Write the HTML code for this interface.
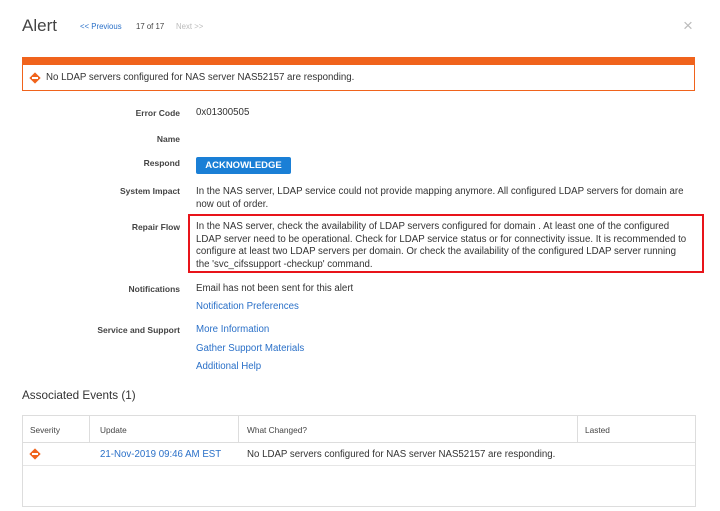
<!DOCTYPE html>
<html><head><style>
body{margin:0;width:720px;height:511px;background:#fff;font-family:"Liberation Sans",sans-serif;color:#333;position:relative;overflow:hidden}
.a{position:absolute;white-space:nowrap}
.l{position:absolute;right:540px;font-size:8.5px;font-weight:bold;color:#444;text-align:right;white-space:nowrap}
.v{position:absolute;left:196px;font-size:9.7px;color:#333;white-space:nowrap}
.lk{color:#2a70c8}
.dia{position:absolute;width:8px;height:8px;background:#f0631c;transform:rotate(45deg)}
.dia:after{content:"";position:absolute;left:1px;top:3px;width:6px;height:2px;background:#fff;transform:rotate(-45deg)}
</style></head><body>
<div class="a" style="left:22px;top:16px;font-size:17px;color:#444">Alert</div>
<div class="a lk" style="left:80px;top:22px;font-size:7.8px">&lt;&lt; Previous</div>
<div class="a" style="left:136px;top:22px;font-size:7.8px;color:#444">17 of 17</div>
<div class="a" style="left:176px;top:22px;font-size:7.8px;color:#bbb">Next &gt;&gt;</div>
<div class="a" style="left:683px;top:16px;font-size:17px;color:#bbb">×</div>
<div class="a" style="left:22px;top:57px;width:673px;height:34px;border:1px solid #f0631c;border-top:8px solid #f0631c;box-sizing:border-box"></div>
<div class="dia" style="left:31px;top:74px"></div>
<div class="a" style="left:46px;top:72px;font-size:9.7px;color:#333">No LDAP servers configured for NAS server NAS52157 are responding.</div>

<div class="l" style="top:108px">Error Code</div><div class="v" style="top:107px">0x01300505</div>
<div class="l" style="top:134px">Name</div>
<div class="l" style="top:158px">Respond</div>
<div class="a" style="left:196px;top:157px;width:95px;height:17px;background:#1a7fd6;border-radius:2px;color:#fff;font-size:9.5px;font-weight:bold;text-align:center;line-height:17px">ACKNOWLEDGE</div>
<div class="l" style="top:186px">System Impact</div>
<div class="v" style="top:185px;line-height:13px">In the NAS server, LDAP service could not provide mapping anymore. All configured LDAP servers for domain are<br>now out of order.</div>
<div class="a" style="left:188px;top:214px;width:516px;height:59px;border:2px solid #e8141a;box-sizing:border-box"></div>
<div class="l" style="top:222px">Repair Flow</div>
<div class="v" style="top:221px;line-height:12.7px">In the NAS server, check the availability of LDAP servers configured for domain . At least one of the configured<br>LDAP server need to be operational. Check for LDAP service status or for connectivity issue. It is recommended to<br>configure at least two LDAP servers per domain. Or check the availability of the configured LDAP server running<br>the 'svc_cifssupport -checkup' command.</div>
<div class="l" style="top:284px">Notifications</div><div class="v" style="top:283px">Email has not been sent for this alert</div>
<div class="v lk" style="top:301px">Notification Preferences</div>
<div class="l" style="top:325px">Service and Support</div><div class="v lk" style="top:324px">More Information</div>
<div class="v lk" style="top:343px">Gather Support Materials</div>
<div class="v lk" style="top:361px">Additional Help</div>
<div class="a" style="left:22px;top:389px;font-size:11.7px;color:#333">Associated Events (1)</div>

<div class="a" style="left:22px;top:415px;width:674px;height:92px;border:1px solid #ddd;box-sizing:border-box"></div>
<div class="a" style="left:23px;top:442px;width:672px;height:1px;background:#ddd"></div>
<div class="a" style="left:23px;top:465px;width:672px;height:1px;background:#e6e6e6"></div>
<div class="a" style="left:89px;top:416px;width:1px;height:26px;background:#ddd"></div>
<div class="a" style="left:238px;top:416px;width:1px;height:26px;background:#ddd"></div>
<div class="a" style="left:577px;top:416px;width:1px;height:26px;background:#ddd"></div>
<div class="a" style="left:30px;top:425px;font-size:8.3px;color:#444">Severity</div>
<div class="a" style="left:100px;top:425px;font-size:8.3px;color:#444">Update</div>
<div class="a" style="left:247px;top:425px;font-size:8.3px;color:#444">What Changed?</div>
<div class="a" style="left:585px;top:425px;font-size:8.3px;color:#444">Lasted</div>
<div class="dia" style="left:31px;top:450px"></div>
<div class="a lk" style="left:100px;top:449px;font-size:9.7px">21-Nov-2019 09:46 AM EST</div>
<div class="a" style="left:247px;top:449px;font-size:9.7px;color:#333">No LDAP servers configured for NAS server NAS52157 are responding.</div>
</body></html>
